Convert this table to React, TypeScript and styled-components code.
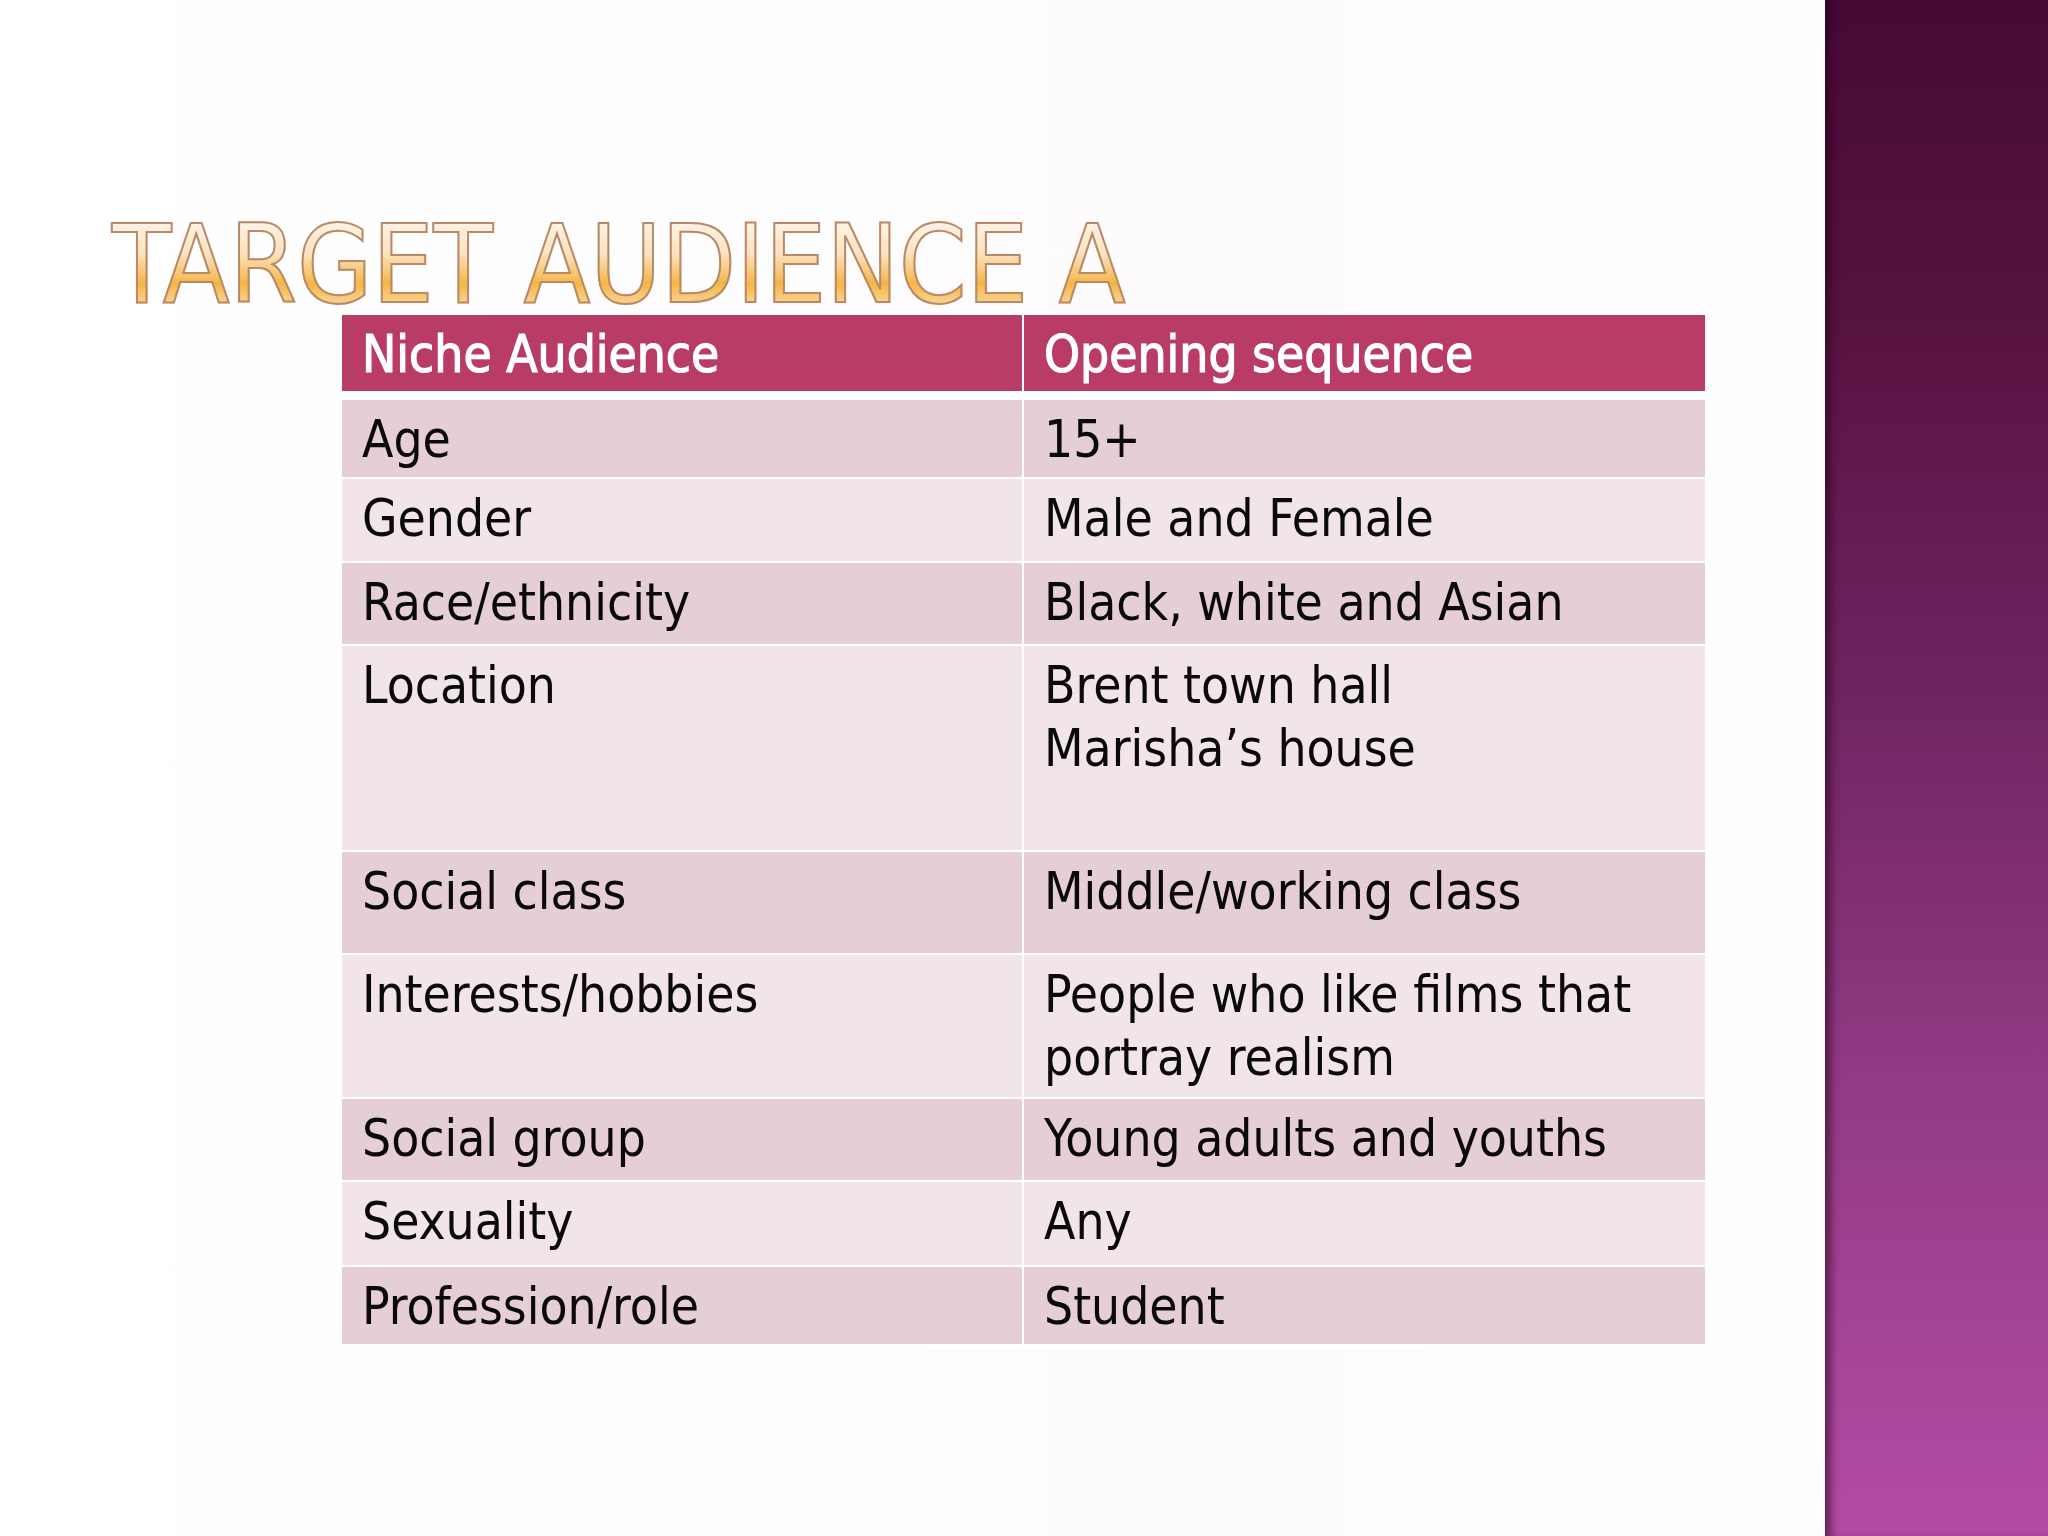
import React from "react";
import styled, { createGlobalStyle } from "styled-components";

type Row = { label: string; value: string[]; height: number; tone: "dark" | "light" };

const rows: Row[] = [
  { label: "Age", value: ["15+"], height: 83, tone: "dark" },
  { label: "Gender", value: ["Male and Female"], height: 84, tone: "light" },
  { label: "Race/ethnicity", value: ["Black, white and Asian"], height: 83, tone: "dark" },
  { label: "Location", value: ["Brent town hall", "Marisha’s house"], height: 206, tone: "light" },
  { label: "Social class", value: ["Middle/working class"], height: 103, tone: "dark" },
  { label: "Interests/hobbies", value: ["People who like films that", "portray realism"], height: 144, tone: "light" },
  { label: "Social group", value: ["Young adults and youths"], height: 83, tone: "dark" },
  { label: "Sexuality", value: ["Any"], height: 85, tone: "light" },
  { label: "Profession/role", value: ["Student"], height: 79, tone: "dark" },
];

const GlobalStyle = createGlobalStyle`
  html, body {
    margin: 0;
    padding: 0;
    background: #ffffff;
  }
`;

const Page = styled.div`
  display: flex;
  width: 2048px;
  height: 1536px;
  overflow: hidden;
  background: linear-gradient(90deg, #ffffff 0%, #fdfbfc 60%, #ffffff 100%);
`;

const Main = styled.main`
  flex: 1;
  display: flex;
  flex-direction: column;
  padding: 215px 0 0 112px;
`;

const Title = styled.h1`
  margin: 0;
  font-family: "DejaVu Sans Condensed", "DejaVu Sans", sans-serif;
  font-weight: 400;
  font-size: 108px;
  line-height: 100px;
  letter-spacing: 0;
  text-transform: uppercase;
  background: linear-gradient(
    180deg,
    #fff6ec 0%,
    #fde3c0 38%,
    #f6c36a 60%,
    #f5b545 68%,
    #f9cf86 86%,
    #fbdfa9 100%
  );
  -webkit-background-clip: text;
  background-clip: text;
  color: transparent;
  -webkit-text-stroke: 2px #b98a6a;
  width: fit-content;
`;

const Sheet = styled.table`
  margin: 0 0 0 230px;
  width: 1363px;
  border-collapse: collapse;
  table-layout: fixed;
  font-family: "DejaVu Sans Condensed", "DejaVu Sans", sans-serif;
  font-size: 51px;
  line-height: 63px;
`;

const HeadCell = styled.th`
  height: 80px;
  padding: 8px 20px 0;
  box-sizing: border-box;
  background: #b83c64;
  color: #ffffff;
  font-weight: 400;
  -webkit-text-stroke: 1.2px #ffffff;
  text-align: left;
  vertical-align: top;
  border-left: 2px solid #ffffff;
  border-right: 2px solid #ffffff;
  border-bottom: 9px solid #ffffff;
  &:first-child { border-left: none; }
  &:last-child { border-right: none; }
`;

const Cell = styled.td<{ $tone: "dark" | "light"; $h: number }>`
  height: ${(p) => p.$h}px;
  padding: 8px 20px 0;
  box-sizing: border-box;
  background: ${(p) => (p.$tone === "dark" ? "#e6ced5" : "#f2e5ea")};
  color: #0a0a0a;
  vertical-align: top;
  border: 2px solid #ffffff;
  &:first-child { border-left: none; }
  &:last-child { border-right: none; }
`;

const Band = styled.aside`
  width: 223px;
  height: 100%;
  background: linear-gradient(
    180deg,
    #460936 0%,
    #56123f 20%,
    #6e2462 45%,
    #923a84 70%,
    #b34ca4 100%
  );
  box-shadow: inset 10px 0 8px -4px rgba(40, 0, 30, 0.55);
`;

export default function App() {
  return (
    <>
      <GlobalStyle />
      <Page>
        <Main>
          <Title>Target Audience A</Title>
          <Sheet>
            <colgroup>
              <col style={{ width: 681 }} />
              <col />
            </colgroup>
            <thead>
              <tr>
                <HeadCell>Niche Audience</HeadCell>
                <HeadCell>Opening sequence</HeadCell>
              </tr>
            </thead>
            <tbody>
              {rows.map((r) => (
                <tr key={r.label}>
                  <Cell $tone={r.tone} $h={r.height}>{r.label}</Cell>
                  <Cell $tone={r.tone} $h={r.height}>
                    {r.value.map((line) => (
                      <div key={line}>{line}</div>
                    ))}
                  </Cell>
                </tr>
              ))}
            </tbody>
          </Sheet>
        </Main>
        <Band />
      </Page>
    </>
  );
}
